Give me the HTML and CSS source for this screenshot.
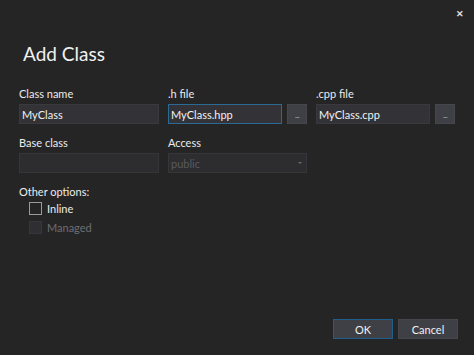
FILE: index.html
```html
<!DOCTYPE html>
<html lang="en">
<head>
    <meta charset="UTF-8">
    <title>Add Class</title>
    <link rel="stylesheet" href="styles.css">
</head>
<body>
    <div class="dialog">
        <div class="titlebar">
            <span class="close-btn">&#x2715;</span>
        </div>
        <div class="header">Add Class</div>
        <form class="fields">
            <div class="field">
                <label for="class-name">Class name</label>
                <input type="text" id="class-name" class="text-input" value="MyClass">
            </div>
            <div class="field">
                <label for="h-file">.h file</label>
                <div class="file-row">
                    <input type="text" id="h-file" class="text-input focused" value="MyClass.hpp">
                    <button type="button" class="browse-button">...</button>
                </div>
            </div>
            <div class="field">
                <label for="cpp-file">.cpp file</label>
                <div class="file-row">
                    <input type="text" id="cpp-file" class="text-input" value="MyClass.cpp">
                    <button type="button" class="browse-button">...</button>
                </div>
            </div>
            <div class="field">
                <label for="base-class">Base class</label>
                <input type="text" id="base-class" class="text-input disabled" disabled>
            </div>
            <div class="field">
                <label>Access</label>
                <div class="select-box">
                    <span>public</span>
                    <span class="arrow"></span>
                </div>
            </div>
        </form>
        <div class="options">
            <div class="options-label">Other options:</div>
            <div class="check-row">
                <span class="check-box"></span>
                <span>Inline</span>
            </div>
            <div class="check-row disabled">
                <span class="check-box"></span>
                <span>Managed</span>
            </div>
        </div>
        <div class="footer">
            <button type="button" class="dialog-button default">OK</button>
            <button type="button" class="dialog-button">Cancel</button>
        </div>
    </div>
</body>
</html>
```

FILE: styles.css
```css
body {
    margin: 0;
    background-color: #252526;
    color: #ececec;
    font-family: Lato, "Open Sans", sans-serif;
    font-size: 11px;
}
.dialog {
    width: 474px;
    height: 355px;
    display: flex;
    flex-direction: column;
    box-sizing: border-box;
}
.titlebar {
    height: 26px;
    display: flex;
    justify-content: flex-end;
    align-items: center;
    padding-right: 10px;
}
.close-btn {
    font-size: 9px;
    color: #e0e0e0;
    font-weight: bold;
}
.header {
    font-size: 19px;
    font-weight: 400;
    padding-left: 23px;
    margin-top: 15px;
    line-height: 26px;
    color: #f1f1f1;
}
.fields {
    display: grid;
    grid-template-columns: 140px 139px 139px;
    column-gap: 9px;
    row-gap: 12px;
    padding-left: 19px;
    margin: 20px 0 0 0;
}
.field label {
    display: block;
    height: 17px;
    line-height: 14px;
}
.file-row {
    display: flex;
    gap: 5px;
}
.text-input {
    box-sizing: border-box;
    width: 100%;
    height: 20px;
    margin: 0;
    padding: 0 2px;
    background-color: #333337;
    border: 1px solid #3a3a3e;
    color: #f1f1f1;
    font-family: inherit;
    font-size: 11px;
    outline: none;
}
.file-row .text-input {
    flex: 1;
}
.text-input.focused {
    border-color: #2c6a96;
}
.text-input.disabled {
    background-color: #2d2d30;
    border-color: #36363a;
}
.browse-button {
    width: 20px;
    height: 20px;
    padding: 0 0 4px 0;
    margin: 0;
    display: flex;
    justify-content: center;
    align-items: flex-end;
    background-color: #3f3f46;
    border: 1px solid #46464d;
    color: #bbbbbb;
    font-size: 8px;
    font-family: inherit;
    line-height: 1;
    letter-spacing: -0.5px;
}
.select-box {
    box-sizing: border-box;
    height: 20px;
    display: flex;
    justify-content: space-between;
    align-items: center;
    padding: 0 4px 0 2px;
    background-color: #2d2d30;
    border: 1px solid #36363a;
    color: #5a5a5e;
}
.arrow {
    width: 0;
    height: 0;
    border-left: 2px solid transparent;
    border-right: 2px solid transparent;
    border-top: 2px solid #6a6a6e;
}
.options {
    padding-left: 19px;
    margin-top: 11px;
}
.options-label {
    line-height: 15px;
}
.check-row {
    display: flex;
    align-items: center;
    gap: 5px;
    padding-left: 10px;
    height: 19px;
}
.check-box {
    box-sizing: border-box;
    width: 13px;
    height: 13px;
    border: 1px solid #9a9a9a;
}
.check-row.disabled {
    color: #6e6e72;
}
.check-row.disabled .check-box {
    background-color: #2f2f33;
    border-color: #37373b;
}
.footer {
    margin-top: auto;
    display: flex;
    justify-content: flex-end;
    gap: 5px;
    padding: 0 16px 16px 0;
}
.dialog-button {
    box-sizing: border-box;
    width: 60px;
    height: 20px;
    margin: 0;
    padding: 0;
    background-color: #3f3f46;
    border: 1px solid #46464d;
    color: #f1f1f1;
    font-family: inherit;
    font-size: 11px;
}
.dialog-button.default {
    border-color: #1f5f8b;
}
```
